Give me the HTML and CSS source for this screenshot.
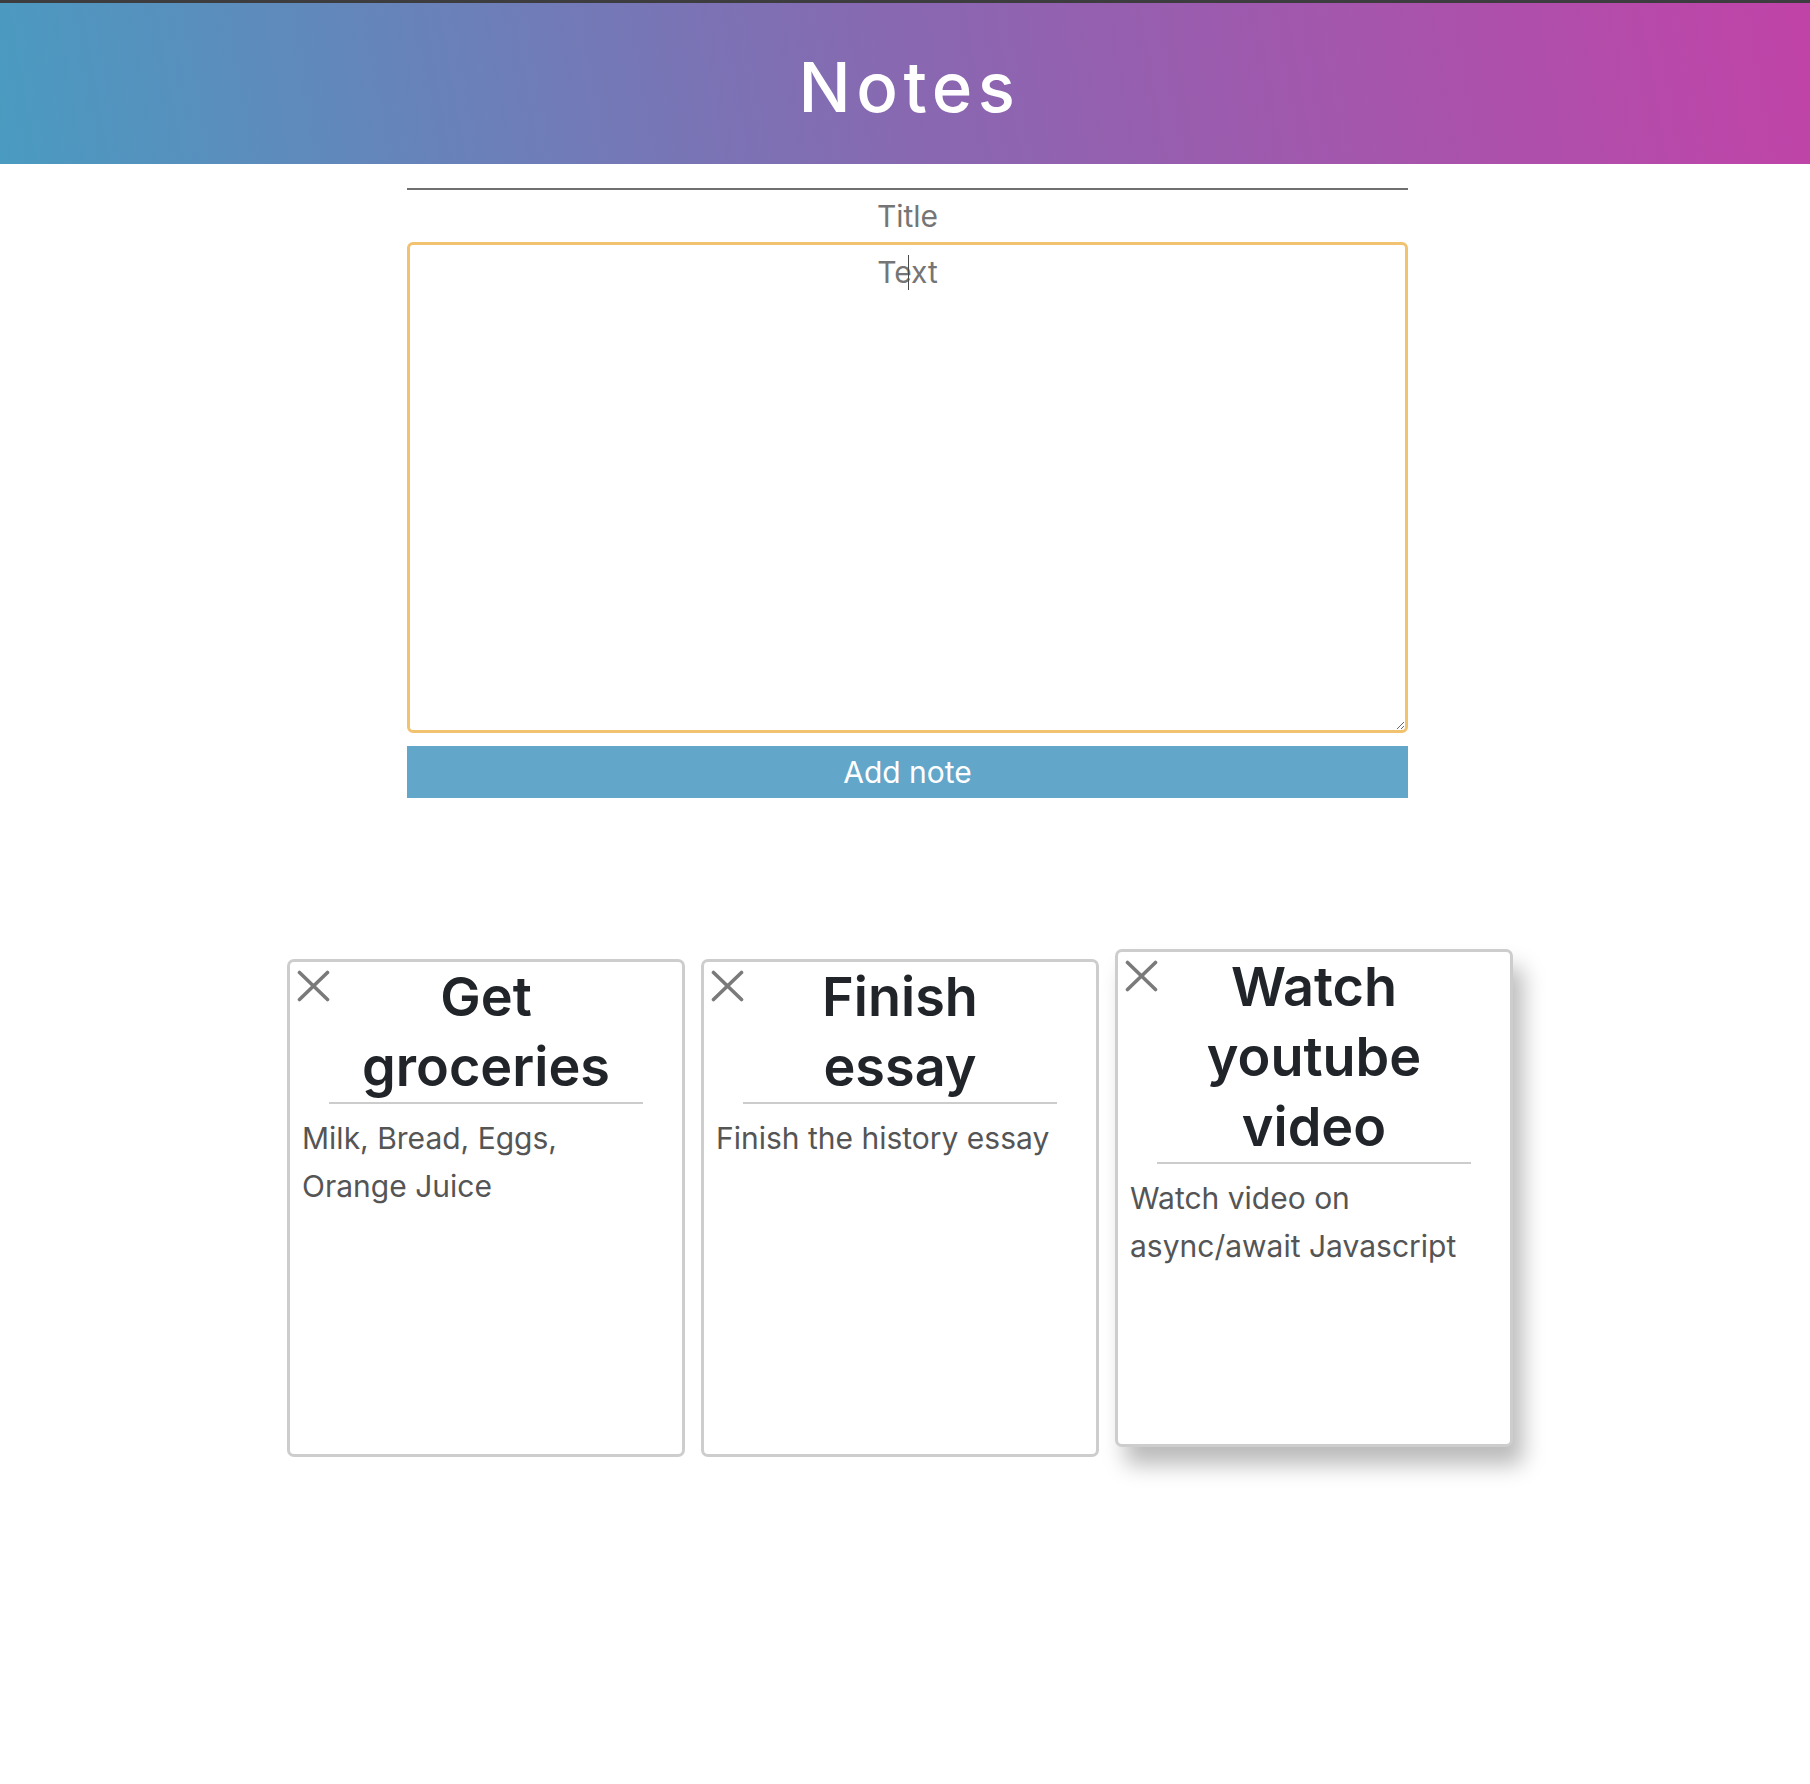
FILE: index.html
```html
<!DOCTYPE html>
<html lang="en">
<head>
<meta charset="utf-8">
<title>Notes</title>
<link rel="stylesheet" href="styles.css">
</head>
<body>
<header class="app-header">
  <h1 class="app-title">Notes</h1>
</header>
<main class="page">
  <form class="note-form">
    <input class="note-title-input" type="text" placeholder="Title">
    <div class="note-text-wrap">
      <textarea class="note-text-input" placeholder="Text"></textarea>
      <span class="caret"></span>
    </div>
    <button class="add-btn" type="button">Add note</button>
  </form>
  <section class="notes">
    <article class="note">
      <button class="note-delete" type="button" aria-label="Delete">
        <svg viewBox="0 0 33 32" width="33" height="32"><path d="M2.5 2.5 L30.5 29.5 M30.5 2.5 L2.5 29.5" stroke="#7a7a7a" stroke-width="3.6" stroke-linecap="round" fill="none"/></svg>
      </button>
      <h2 class="note-title">Get groceries</h2>
      <p class="note-body">Milk, Bread, Eggs, Orange Juice</p>
    </article>
    <article class="note">
      <button class="note-delete" type="button" aria-label="Delete">
        <svg viewBox="0 0 33 32" width="33" height="32"><path d="M2.5 2.5 L30.5 29.5 M30.5 2.5 L2.5 29.5" stroke="#7a7a7a" stroke-width="3.6" stroke-linecap="round" fill="none"/></svg>
      </button>
      <h2 class="note-title">Finish essay</h2>
      <p class="note-body">Finish the history essay</p>
    </article>
    <article class="note note-hover">
      <button class="note-delete" type="button" aria-label="Delete">
        <svg viewBox="0 0 33 32" width="33" height="32"><path d="M2.5 2.5 L30.5 29.5 M30.5 2.5 L2.5 29.5" stroke="#7a7a7a" stroke-width="3.6" stroke-linecap="round" fill="none"/></svg>
      </button>
      <h2 class="note-title">Watch youtube video</h2>
      <p class="note-body">Watch video on async/await Javascript</p>
    </article>
  </section>
</main>
</body>
</html>
```
FILE: styles.css
```css
html, body {
  margin: 0;
  padding: 0;
  background: #fff;
}

body {
  font-family: Inter, "Noto Sans", "Liberation Sans", sans-serif;
  min-height: 1784px;
}

.app-header {
  box-sizing: border-box;
  height: 164px;
  border-top: 3px solid #3d3d40;
  padding-top: 6px;
  background: linear-gradient(80deg, #4a9bc1 0%, #8868b1 50%, #c143a8 100%);
  display: flex;
  align-items: center;
  justify-content: center;
}

.app-title {
  margin: 0;
  padding-left: 9px;
  color: #fff;
  font-size: 69px;
  font-weight: 500;
  letter-spacing: 5.5px;
  line-height: normal;
}

.page {
  padding-left: 5px;
  padding-bottom: 120px;
}

.note-form {
  width: 1001px;
  margin: 24px auto 0;
}

.note-title-input {
  display: block;
  box-sizing: border-box;
  width: 100%;
  height: 54px;
  margin: 0;
  padding: 0;
  border: none;
  border-top: 2px solid #707070;
  outline: none;
  background: #fff;
  text-align: center;
  font-family: inherit;
  font-size: 30px;
  color: #333;
}

.note-title-input::placeholder,
.note-text-input::placeholder {
  color: #757575;
  opacity: 1;
}

.note-text-wrap {
  position: relative;
}

.note-text-input {
  display: block;
  box-sizing: border-box;
  width: 100%;
  height: 491px;
  margin: 0;
  padding: 9px 10px;
  border: 3px solid #f1c371;
  border-radius: 6px;
  outline: none;
  text-align: center;
  font-family: inherit;
  font-size: 30px;
  color: #333;
  resize: vertical;
}

.caret {
  position: absolute;
  left: 501px;
  top: 13px;
  width: 1px;
  height: 35px;
  background: #4a4a4a;
}

.add-btn {
  display: block;
  box-sizing: border-box;
  width: 100%;
  height: 52px;
  margin: 13px 0 0;
  padding: 0;
  border: none;
  background: #62a6c9;
  color: #fff;
  font-family: inherit;
  font-size: 30px;
}

.notes {
  margin-top: 161px;
  padding-right: 15px;
  display: flex;
  justify-content: center;
  align-items: flex-start;
  gap: 16px;
}

.note {
  position: relative;
  box-sizing: border-box;
  width: 398px;
  height: 498px;
  border: 3px solid #cdcdcd;
  border-radius: 7px;
  background: #fff;
}

.note-hover {
  transform: translateY(-10px);
  box-shadow: 10px 18px 22px rgba(0, 0, 0, 0.27);
}

.note-delete {
  position: absolute;
  top: 8px;
  left: 7px;
  width: 33px;
  height: 32px;
  padding: 0;
  border: none;
  background: none;
}

.note-delete svg {
  display: block;
}

.note-title {
  width: 80%;
  margin: 0 auto;
  text-align: center;
  font-size: 54px;
  font-weight: 600;
  line-height: 70px;
  color: #212529;
  border-bottom: 2px solid #cccccc;
}

.note-body {
  margin: 10px 0 0;
  padding: 0 12px;
  font-size: 30px;
  line-height: 48px;
  color: #555;
}
```
